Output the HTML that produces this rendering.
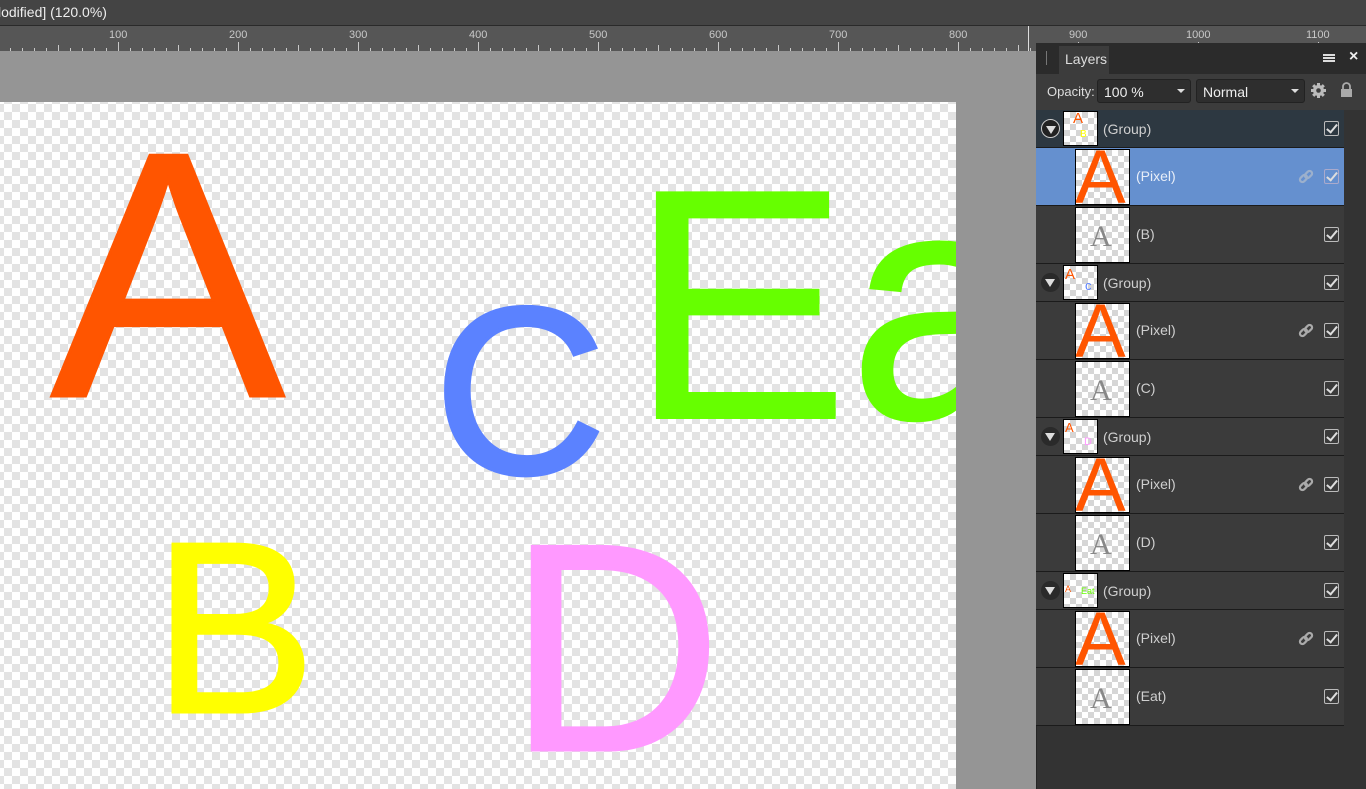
<!DOCTYPE html>
<html><head><meta charset="utf-8"><style>
*{margin:0;padding:0;box-sizing:border-box}
body{width:1366px;height:789px;overflow:hidden;background:#959595;font-family:"Liberation Sans",sans-serif;position:relative}
.abs{position:absolute}
.chk{background-color:#fff;background-image:linear-gradient(45deg,#e3e3e3 25%,transparent 25%,transparent 75%,#e3e3e3 75%),linear-gradient(45deg,#e3e3e3 25%,transparent 25%,transparent 75%,#e3e3e3 75%);background-size:16px 16px;background-position:0 0,8px 8px}
.chks{background-color:#fff;background-image:linear-gradient(45deg,#d6d6d6 25%,transparent 25%,transparent 75%,#d6d6d6 75%),linear-gradient(45deg,#d6d6d6 25%,transparent 25%,transparent 75%,#d6d6d6 75%);background-size:12px 12px;background-position:0 0,6px 6px}
.row{position:absolute;left:1036px;width:308px;border-bottom:1px solid #1b1b1b;background:#3b3b3b}
.lbl{position:absolute;color:#cfcfcf;font-size:14px}
.cb{position:absolute;left:288px;width:15px;height:15px;border:1px solid #bbb;border-radius:2px}
.cb:after{content:"";position:absolute;left:4px;top:0px;width:4px;height:9px;border:solid #ddd;border-width:0 2px 2px 0;transform:rotate(40deg)}
.th{position:absolute;border:1px solid #000;overflow:hidden}
.ex{position:absolute;left:5px;width:19px;height:19px;border-radius:50%;background:#2a2a2a}
.ex:after{content:"";position:absolute;left:4px;top:6px;border-left:5.5px solid transparent;border-right:5.5px solid transparent;border-top:8px solid #ddd}
.lnk{position:absolute;left:262px;top:21px}
</style></head><body>
<div class="abs" style="left:0;top:0;width:1366px;height:26px;background:#444;border-bottom:1px solid #2a2a2a"></div>
<div class="abs" style="left:-2px;top:4px;color:#eee;font-size:14px">lodified] (120.0%)</div>
<div class="abs" style="left:0;top:26px;width:1366px;height:25px;background:#565656"></div>
<div class="abs" style="left:-2px;top:48px;width:1368px;height:3px;background:repeating-linear-gradient(90deg,#c8c8c8 0 1px,transparent 1px 12px)"></div>
<div class="abs" style="left:58px;top:45px;width:1308px;height:6px;background:repeating-linear-gradient(90deg,#c8c8c8 0 1px,transparent 1px 120px)"></div>
<div class="abs" style="left:-2px;top:42px;width:1368px;height:9px;background:repeating-linear-gradient(90deg,#c8c8c8 0 1px,transparent 1px 120px)"></div>
<div class="abs" style="left:1028px;top:26px;width:1px;height:25px;background:#ddd"></div>
<svg class="abs" style="left:0;top:26px" width="1366" height="25">
<g fill="#c8c8c8" font-size="11" font-family="Liberation Sans">
<text x="109" y="12">100</text><text x="229" y="12">200</text><text x="349" y="12">300</text><text x="469" y="12">400</text><text x="589" y="12">500</text><text x="709" y="12">600</text><text x="829" y="12">700</text><text x="949" y="12">800</text><text x="1069" y="12">900</text><text x="1186" y="12">1000</text><text x="1306" y="12">1100</text>
</g></svg>
<div class="abs chk" style="left:0;top:102px;width:956px;height:687px;background-position:4px 2px,12px 10px"></div>
<svg class="abs" style="left:0;top:0" width="956" height="789">
<g font-family="Liberation Sans" stroke-linejoin="miter">
<text x="51" y="396" font-size="350" fill="#ff5500" stroke="#ff5500" stroke-width="3">A</text>
<text x="434" y="473" font-size="238" fill="#5b82ff" stroke="#5b82ff" stroke-width="4">C</text>
<text x="630" y="418" font-size="328" fill="#66ff00" stroke="#66ff00" stroke-width="2">Eat</text>
<text x="153" y="712" font-size="244" fill="#ffff00" stroke="#ffff00" stroke-width="3">B</text>
<text x="508" y="750" font-size="296" fill="#ff99ff" stroke="#ff99ff" stroke-width="3">D</text>
</g></svg>
<div class="abs" style="left:1036px;top:43px;width:330px;height:746px;background:#333;border-left:1px solid #262626"></div>
<div class="abs" style="left:1036px;top:43px;width:330px;height:31px;background:#2b2b2b"></div>
<div class="abs" style="left:1046px;top:51px;width:1px;height:14px;background:#777"></div>
<div class="abs" style="left:1059px;top:46px;width:50px;height:28px;background:#3c3c3c;color:#ddd;font-size:14px;padding:5px 0 0 6px">Layers</div>
<div class="abs" style="left:1323px;top:54px;width:12px;height:2px;background:#ddd;box-shadow:0 3px 0 #ddd,0 6px 0 #ddd"></div>
<div class="abs" style="left:1349px;top:48px;color:#eee;font-size:16px;font-weight:bold">×</div>
<div class="abs" style="left:1036px;top:74px;width:330px;height:36px;background:#3c3c3c"></div>
<div class="abs" style="left:1047px;top:84px;color:#ddd;font-size:13px">Opacity:</div>
<div class="abs" style="left:1097px;top:79px;width:94px;height:24px;background:#2e2e2e;border:1px solid #222;border-radius:3px;color:#eee;font-size:14px;padding:4px 0 0 6px">100 %</div>
<div class="abs" style="left:1177px;top:89px;border-left:4px solid transparent;border-right:4px solid transparent;border-top:4px solid #ddd"></div>
<div class="abs" style="left:1196px;top:79px;width:109px;height:24px;background:#2e2e2e;border:1px solid #222;border-radius:3px;color:#eee;font-size:14px;padding:4px 0 0 6px">Normal</div>
<div class="abs" style="left:1291px;top:89px;border-left:4px solid transparent;border-right:4px solid transparent;border-top:4px solid #ddd"></div>
<svg class="abs" style="left:1310px;top:82px" width="17" height="17" viewBox="0 0 17 17"><g fill="#bbb"><circle cx="8.5" cy="8.5" r="5.5"/><g stroke="#bbb" stroke-width="3"><line x1="8.5" y1="1" x2="8.5" y2="16"/><line x1="1" y1="8.5" x2="16" y2="8.5"/><line x1="3.2" y1="3.2" x2="13.8" y2="13.8"/><line x1="13.8" y1="3.2" x2="3.2" y2="13.8"/></g></g><circle cx="8.5" cy="8.5" r="2.3" fill="#3c3c3c"/></svg>
<svg class="abs" style="left:1340px;top:82px" width="13" height="16"><path d="M3 7V4.5a3.5 3.5 0 0 1 7 0V7" fill="none" stroke="#aaa" stroke-width="1.8"/><rect x="1" y="7" width="11" height="8" fill="#aaa"/></svg>
<div class="abs" style="left:1344px;top:110px;width:22px;height:679px;background:#333"></div>

<svg width="0" height="0" style="position:absolute"><defs><g id="lk"><g fill="none" stroke-width="2.2"><rect x="1.5" y="7" width="8" height="5" rx="2.5" transform="rotate(-45 5.5 9.5)"/><rect x="6.5" y="3" width="8" height="5" rx="2.5" transform="rotate(-45 10.5 5.5)"/></g></g></defs></svg>

<div class="row" style="top:110px;height:38px;background:#2d3841"><div class="ex" style="top:9px;background:#222;border:1.5px solid #ccc"></div>
<div class="th chks" style="left:27px;top:1px;width:35px;height:35px;border-color:#000"><span class="abs" style="left:9px;top:-2px;color:#ff5500;font-size:15px">A</span><span class="abs" style="left:16px;top:17px;color:#ffff00;font-size:10px">B</span></div>
<div class="lbl" style="left:67px;top:11px">(Group)</div><div class="cb" style="top:11px"></div></div>
<div class="row" style="top:148px;height:58px;background:#6590cf">
<div class="th chks" style="left:39px;top:1px;width:55px;height:56px"><span class="abs" style="left:-1px;top:-10px;color:#ff5500;font-size:76px;line-height:1">A</span></div>
<div class="lbl" style="left:100px;top:20px;color:#e8eef8">(Pixel)</div><svg class="lnk" width="16" height="15" stroke="#9cb0cc"><use href="#lk"/></svg><div class="cb" style="top:21px;border-color:#aac"></div></div>
<div class="row" style="top:206px;height:58px">
<div class="th chks" style="left:39px;top:1px;width:55px;height:56px"><span class="abs" style="left:14px;top:12px;color:#888;font-size:30px;font-family:'Liberation Serif',serif">A</span></div>
<div class="lbl" style="left:100px;top:20px">(B)</div><div class="cb" style="top:21px"></div></div>

<div class="row" style="top:264px;height:38px"><div class="ex" style="top:9px"></div>
<div class="th chks" style="left:27px;top:1px;width:35px;height:35px"><span class="abs" style="left:1px;top:0px;color:#ff5500;font-size:15px">A</span><span class="abs" style="left:21px;top:12px;color:#5b82ff;font-size:13px">c</span></div>
<div class="lbl" style="left:67px;top:11px">(Group)</div><div class="cb" style="top:11px"></div></div>
<div class="row" style="top:302px;height:58px">
<div class="th chks" style="left:39px;top:1px;width:55px;height:56px"><span class="abs" style="left:-1px;top:-10px;color:#ff5500;font-size:76px;line-height:1">A</span></div>
<div class="lbl" style="left:100px;top:20px">(Pixel)</div><svg class="lnk" width="16" height="15" stroke="#aaa"><use href="#lk"/></svg><div class="cb" style="top:21px"></div></div>
<div class="row" style="top:360px;height:58px">
<div class="th chks" style="left:39px;top:1px;width:55px;height:56px"><span class="abs" style="left:14px;top:12px;color:#888;font-size:30px;font-family:'Liberation Serif',serif">A</span></div>
<div class="lbl" style="left:100px;top:20px">(C)</div><div class="cb" style="top:21px"></div></div>

<div class="row" style="top:418px;height:38px"><div class="ex" style="top:9px"></div>
<div class="th chks" style="left:27px;top:1px;width:35px;height:35px"><span class="abs" style="left:1px;top:0px;color:#ff5500;font-size:13px">A</span><span class="abs" style="left:20px;top:16px;color:#ff99ff;font-size:11px">D</span></div>
<div class="lbl" style="left:67px;top:11px">(Group)</div><div class="cb" style="top:11px"></div></div>
<div class="row" style="top:456px;height:58px">
<div class="th chks" style="left:39px;top:1px;width:55px;height:56px"><span class="abs" style="left:-1px;top:-10px;color:#ff5500;font-size:76px;line-height:1">A</span></div>
<div class="lbl" style="left:100px;top:20px">(Pixel)</div><svg class="lnk" width="16" height="15" stroke="#aaa"><use href="#lk"/></svg><div class="cb" style="top:21px"></div></div>
<div class="row" style="top:514px;height:58px">
<div class="th chks" style="left:39px;top:1px;width:55px;height:56px"><span class="abs" style="left:14px;top:12px;color:#888;font-size:30px;font-family:'Liberation Serif',serif">A</span></div>
<div class="lbl" style="left:100px;top:20px">(D)</div><div class="cb" style="top:21px"></div></div>

<div class="row" style="top:572px;height:38px"><div class="ex" style="top:9px"></div>
<div class="th chks" style="left:27px;top:1px;width:35px;height:35px"><span class="abs" style="left:1px;top:10px;color:#ff5500;font-size:9px">A</span><span class="abs" style="left:17px;top:12px;color:#66ff00;font-size:9px">Eat</span></div>
<div class="lbl" style="left:67px;top:11px">(Group)</div><div class="cb" style="top:11px"></div></div>
<div class="row" style="top:610px;height:58px">
<div class="th chks" style="left:39px;top:1px;width:55px;height:56px"><span class="abs" style="left:-1px;top:-10px;color:#ff5500;font-size:76px;line-height:1">A</span></div>
<div class="lbl" style="left:100px;top:20px">(Pixel)</div><svg class="lnk" width="16" height="15" stroke="#aaa"><use href="#lk"/></svg><div class="cb" style="top:21px"></div></div>
<div class="row" style="top:668px;height:58px">
<div class="th chks" style="left:39px;top:1px;width:55px;height:56px"><span class="abs" style="left:14px;top:12px;color:#888;font-size:30px;font-family:'Liberation Serif',serif">A</span></div>
<div class="lbl" style="left:100px;top:20px">(Eat)</div><div class="cb" style="top:21px"></div></div>
</body></html>
